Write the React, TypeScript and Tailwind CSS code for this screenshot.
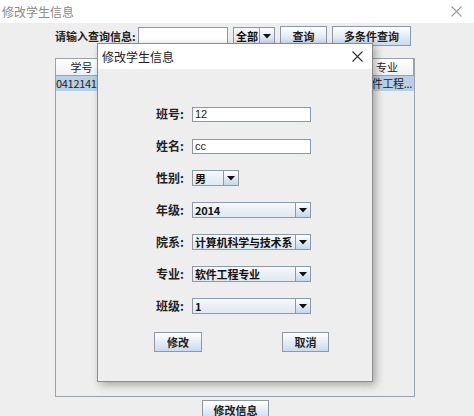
const FONT = "font-['Noto_Sans_CJK_SC','Liberation_Sans',sans-serif]"

function CloseX({ color, size = 11 }: { color: string; size?: number }) {
  return (
    <svg width={size} height={size} viewBox="0 0 11 11" fill="none">
      <path d="M0.5 0.5 L10.5 10.5 M10.5 0.5 L0.5 10.5" stroke={color} strokeWidth="1.1" />
    </svg>
  )
}

function Arrow() {
  return (
    <div className="w-[15px] h-full shrink-0 flex items-center justify-center border-l border-[#8e99a8] bg-gradient-to-b from-[#ffffff] to-[#c5d6ea]">
      <svg width="8" height="5" viewBox="0 0 8 5">
        <path d="M0 0 H8 L4 4.5 Z" fill="#111" />
      </svg>
    </div>
  )
}

function Combo({ value, width }: { value: string; width: string }) {
  return (
    <div className={`${width} h-[16px] flex border border-[#8e99a8] bg-gradient-to-b from-[#f6f8fb] to-[#dfe7f0]`}>
      <span className="flex-1 pl-[2px] text-[11px] leading-[14px] font-bold tracking-[-0.2px] text-[#111] whitespace-nowrap overflow-hidden">{value}</span>
      <Arrow />
    </div>
  )
}

function TextField({ value }: { value: string }) {
  return (
    <div className="w-[119px] h-[15px] border border-[#8e99a8] bg-white pl-[2px] text-[11px] leading-[13px] text-[#222] font-['Liberation_Sans',sans-serif]">
      {value}
    </div>
  )
}

function Btn({ label, width }: { label: string; width: string }) {
  return (
    <div className={`${width} h-[20px] flex items-center justify-center border border-[#8e99a8] bg-gradient-to-b from-[#ffffff] to-[#c9dbee] text-[11px] font-bold text-[#222]`}>
      {label}
    </div>
  )
}

function Row({ label, children }: { label: string; children: React.ReactNode }) {
  return (
    <div className="flex items-center h-[16px]">
      <span className="w-[86px] text-right text-[12px] font-bold text-[#222]">{label}</span>
      <div className="ml-[8px]">{children}</div>
    </div>
  )
}

export default function App() {
  const cols = [
    { name: '学号', w: 'w-[52px]', cell: '0412141...' },
    { name: '姓名', w: 'w-[51px]', cell: 'cc' },
    { name: '性别', w: 'w-[51px]', cell: '男' },
    { name: '年级', w: 'w-[51px]', cell: '2014' },
    { name: '院系', w: 'w-[50px]', cell: '计算机...' },
    { name: '班级', w: 'w-[50px]', cell: '1' },
    { name: '专业', w: 'w-[53px]', cell: '软件工程...' },
  ]

  return (
    <div className={`relative w-[474px] h-[416px] bg-[#eeeeee] overflow-hidden ${FONT}`}>
      {/* outer window title */}
      <div className="h-[23px] bg-white flex items-center justify-between pl-[2px] pr-[12px]">
        <span className="text-[12px] text-[#8a8a8a]">修改学生信息</span>
        <CloseX color="#9a9a9a" />
      </div>

      {/* query row */}
      <div className="flex items-center pl-[55px] mt-[4px] h-[18px]">
        <span className="w-[83px] text-[11px] font-bold text-[#222] whitespace-nowrap">请输入查询信息:</span>
        <div className="w-[90px] h-[18px] border border-[#8e99a8] bg-white" />
        <div className="ml-[5px] w-[42px] h-[18px] flex border border-[#8e99a8] bg-gradient-to-b from-[#f6f8fb] to-[#dfe7f0]">
          <span className="flex-1 pl-[2px] text-[11px] leading-[16px] font-bold text-[#111]">全部</span>
          <Arrow />
        </div>
        <div className="ml-[5px]"><Btn label="查询" width="w-[47px]" /></div>
        <div className="ml-[5px]"><Btn label="多条件查询" width="w-[79px]" /></div>
      </div>

      {/* table */}
      <div className="mt-[13px] ml-[55px] w-[360px] h-[339px] border border-[#9aa3ad] bg-[#eeeeee] overflow-hidden">
        <div className="flex h-[17px]">
          {cols.map((c) => (
            <div key={c.name} className={`${c.w} shrink-0 flex items-center justify-center border-r border-b border-[#9aa3ad] bg-gradient-to-b from-[#ffffff] to-[#eef1f5] text-[11px] text-[#222]`}>
              {c.name}
            </div>
          ))}
        </div>
        <div className="flex h-[15px] bg-[#b8cfe5]">
          {cols.map((c) => (
            <div key={c.name} className={`${c.w} shrink-0 overflow-hidden whitespace-nowrap text-[11px] leading-[15px] text-[#222] tracking-[-0.3px]`}>
              {c.cell}
            </div>
          ))}
        </div>
      </div>

      {/* bottom button */}
      <div className="mt-[3px] ml-[202px]">
        <Btn label="修改信息" width="w-[67px]" />
      </div>

      {/* modal dialog */}
      <div className="absolute left-[97px] top-[43px] w-[276px] h-[339px] border border-[#8c8c8c] bg-[#eeeeee] shadow-[3px_3px_8px_rgba(0,0,0,0.3)] flex flex-col">
        <div className="h-[25px] bg-white flex items-center justify-between pl-[4px] pr-[9px]">
          <span className="text-[12px] text-[#222]">修改学生信息</span>
          <CloseX color="#333" />
        </div>
        <div className="flex flex-col gap-[16px] pt-[37px]">
          <Row label="班号:"><TextField value="12" /></Row>
          <Row label="姓名:"><TextField value="cc" /></Row>
          <Row label="性别:"><Combo value="男" width="w-[47px]" /></Row>
          <Row label="年级:"><Combo value="2014" width="w-[119px]" /></Row>
          <Row label="院系:"><Combo value="计算机科学与技术系" width="w-[119px]" /></Row>
          <Row label="专业:"><Combo value="软件工程专业" width="w-[119px]" /></Row>
          <Row label="班级:"><Combo value="1" width="w-[119px]" /></Row>
        </div>
        <div className="flex mt-[18px] pl-[56px]">
          <Btn label="修改" width="w-[48px]" />
          <div className="ml-[80px]"><Btn label="取消" width="w-[47px]" /></div>
        </div>
      </div>
    </div>
  )
}
